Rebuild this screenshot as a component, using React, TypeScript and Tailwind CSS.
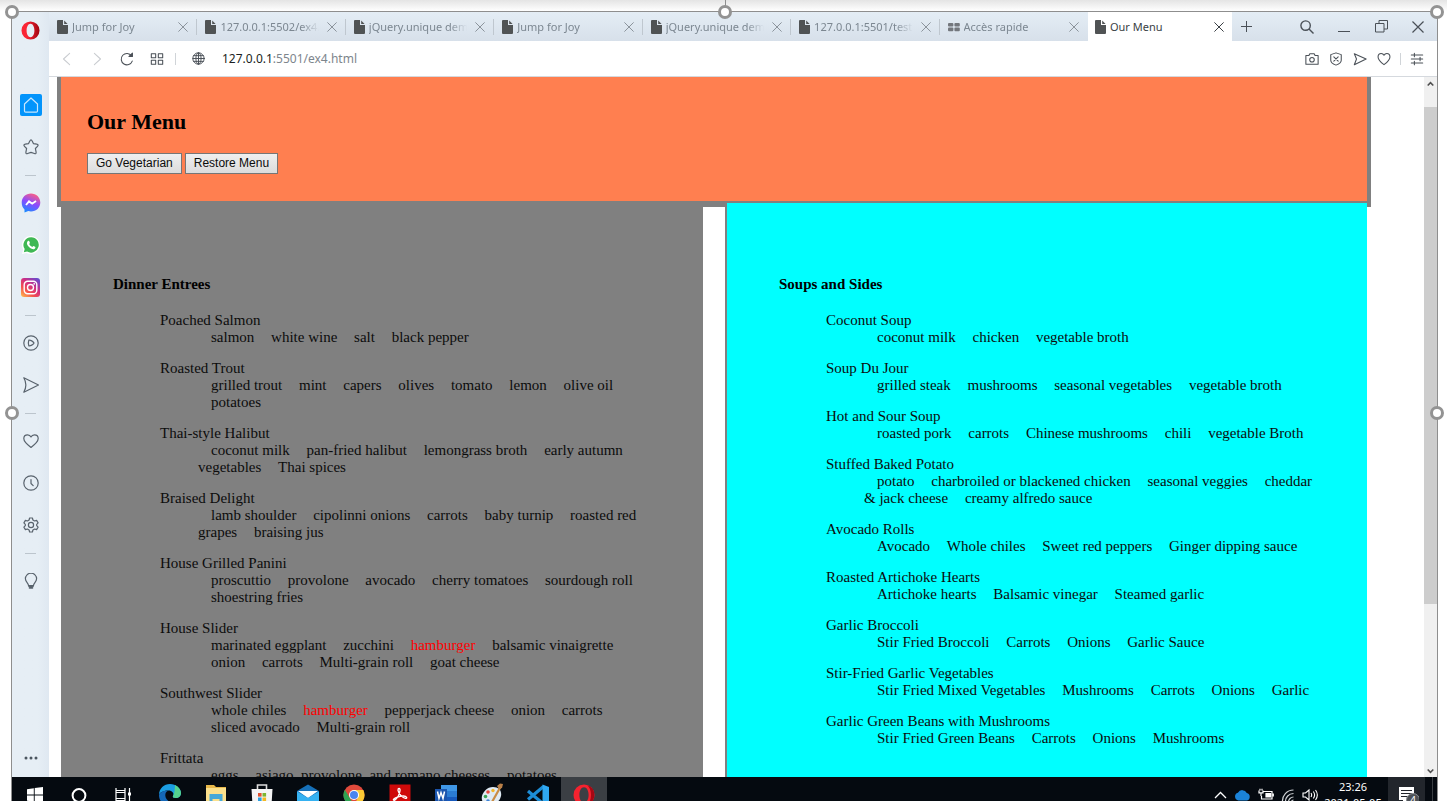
import { useState } from 'react'
import type { ReactNode } from 'react'

interface Dish {
	name: string
	ingredients: string[]
}

const entrees: Dish[] = [
	{ name: 'Poached Salmon', ingredients: ['salmon', 'white wine', 'salt', 'black pepper'] },
	{ name: 'Roasted Trout', ingredients: ['grilled trout', 'mint', 'capers', 'olives', 'tomato', 'lemon', 'olive oil', 'potatoes'] },
	{ name: 'Thai-style Halibut', ingredients: ['coconut milk', 'pan-fried halibut', 'lemongrass broth', 'early autumn vegetables', 'Thai spices'] },
	{ name: 'Braised Delight', ingredients: ['lamb shoulder', 'cipolinni onions', 'carrots', 'baby turnip', 'roasted red grapes', 'braising jus'] },
	{ name: 'House Grilled Panini', ingredients: ['proscuttio', 'provolone', 'avocado', 'cherry tomatoes', 'sourdough roll', 'shoestring fries'] },
	{ name: 'House Slider', ingredients: ['marinated eggplant', 'zucchini', 'hamburger', 'balsamic vinaigrette', 'onion', 'carrots', 'Multi-grain roll', 'goat cheese'] },
	{ name: 'Southwest Slider', ingredients: ['whole chiles', 'hamburger', 'pepperjack cheese', 'onion', 'carrots', 'sliced avocado', 'Multi-grain roll'] },
	{ name: 'Frittata', ingredients: ['eggs', 'asiago, provolone, and romano cheeses', 'potatoes'] },
]

const sides: Dish[] = [
	{ name: 'Coconut Soup', ingredients: ['coconut milk', 'chicken', 'vegetable broth'] },
	{ name: 'Soup Du Jour', ingredients: ['grilled steak', 'mushrooms', 'seasonal vegetables', 'vegetable broth'] },
	{ name: 'Hot and Sour Soup', ingredients: ['roasted pork', 'carrots', 'Chinese mushrooms', 'chili', 'vegetable Broth'] },
	{ name: 'Stuffed Baked Potato', ingredients: ['potato', 'charbroiled or blackened chicken', 'seasonal veggies', 'cheddar & jack cheese', 'creamy alfredo sauce'] },
	{ name: 'Avocado Rolls', ingredients: ['Avocado', 'Whole chiles', 'Sweet red peppers', 'Ginger dipping sauce'] },
	{ name: 'Roasted Artichoke Hearts', ingredients: ['Artichoke hearts', 'Balsamic vinegar', 'Steamed garlic'] },
	{ name: 'Garlic Broccoli', ingredients: ['Stir Fried Broccoli', 'Carrots', 'Onions', 'Garlic Sauce'] },
	{ name: 'Stir-Fried Garlic Vegetables', ingredients: ['Stir Fried Mixed Vegetables', 'Mushrooms', 'Carrots', 'Onions', 'Garlic'] },
	{ name: 'Garlic Green Beans with Mushrooms', ingredients: ['Stir Fried Green Beans', 'Carrots', 'Onions', 'Mushrooms'] },
]

const tabs = [
	'Jump for Joy',
	'127.0.0.1:5502/ex4.html',
	'jQuery.unique demo',
	'Jump for Joy',
	'jQuery.unique demo',
	'127.0.0.1:5501/test.html',
	'Accès rapide',
]

interface LineIconProps {
	size?: number
	children: ReactNode
}

// thin outlined glyph on a 16 unit grid
function LineIcon({ size = 16, children }: LineIconProps) {
	return (
		<svg width={size} height={size} viewBox="0 0 16 16" fill="none" stroke="currentColor" strokeWidth="1.2" strokeLinecap="round" strokeLinejoin="round" className="shrink-0">
			{children}
		</svg>
	)
}

function FileIcon() {
	return (
		<svg width="11" height="14" viewBox="0 0 11 14" fill="#505354" className="shrink-0">
			<path d="M1 0h5v5h5v8a1 1 0 0 1-1 1H1a1 1 0 0 1-1-1V1a1 1 0 0 1 1-1z" />
			<path d="M7.2 0.6 10.6 4H7.2z" />
		</svg>
	)
}

function SpeedDialIcon() {
	return (
		<svg width="12" height="14" viewBox="0 0 12 14" fill="#73777d" className="shrink-0">
			<rect x="0" y="3" width="5.4" height="3.6" rx="1" />
			<rect x="6.4" y="3" width="5.4" height="3.6" rx="1" />
			<rect x="0" y="7.6" width="5.4" height="3.6" rx="1" />
			<rect x="6.4" y="7.6" width="5.4" height="3.6" rx="1" />
		</svg>
	)
}

function CloseIcon({ size = 10 }: { size?: number }) {
	return (
		<svg width={size} height={size} viewBox="0 0 10 10" fill="none" stroke="currentColor" strokeWidth="1" className="shrink-0">
			<path d="M0.4 0.4 9.6 9.6M9.6 0.4 0.4 9.6" />
		</svg>
	)
}

function OperaLogo({ size }: { size: number }) {
	return (
		<svg width={size} height={size} viewBox="0 0 20 20">
			<defs>
				<linearGradient id="opera" x1="0" x2="1">
					<stop offset="0.3" stopColor="#fa2535" />
					<stop offset="1" stopColor="#a1040f" />
				</linearGradient>
			</defs>
			<path fillRule="evenodd" fill="url(#opera)" d="M10 0.5a9.5 9.5 0 1 0 0 19a9.5 9.5 0 1 0 0-19zM10 3c2.400 0 4.100 3 4.100 7s-1.700 7-4.100 7s-4.100-3-4.100-7s1.700-7 4.100-7z" />
		</svg>
	)
}

function TabBar() {
	return (
		<div className="flex h-[29px] bg-linear-to-b from-[#e4edf5] to-[#d7e0ea]">
			{tabs.map((title, i) => (
				<div key={i} className="flex min-w-0 flex-1 items-center gap-1 pl-2 text-[#7c8791]">
					{title === 'Accès rapide' ? <SpeedDialIcon /> : <FileIcon />}
					<span className="min-w-0 flex-1 overflow-hidden whitespace-nowrap text-[11px] leading-4 [mask-image:linear-gradient(to_right,black_82%,transparent)]">
						{title}
					</span>
					<button aria-label="Close tab" className="flex h-4 w-[18px] items-center justify-center text-[#8b939b]">
						<CloseIcon />
					</button>
					<span className={i < 6 ? 'h-4 w-px bg-[#bfc7cf]' : 'w-px'} />
				</div>
			))}
			<div className="flex w-36 items-center gap-1 bg-white pl-[7px] text-[#3a3f44]">
				<FileIcon />
				<span className="flex-1 text-[11px] leading-4">Our Menu</span>
				<button aria-label="Close tab" className="mr-[7px] flex h-4 w-3 items-center justify-center">
					<CloseIcon />
				</button>
			</div>
			<div className="flex w-[205px] items-center text-[#4a5057]">
				<button aria-label="New tab" className="flex w-[30px] justify-center">
					<svg width="11" height="11" viewBox="0 0 11 11" stroke="currentColor" fill="none"><path d="M5.500 0v11M0 5.500h11" /></svg>
				</button>
				<span className="flex-1" />
				<button aria-label="Search tabs" className="flex w-[37px] justify-center">
					<svg width="14" height="14" viewBox="0 0 14 14" stroke="currentColor" strokeWidth="1.400" fill="none">
						<circle cx="5.600" cy="5.600" r="4.700" /><path d="m9 9 4.500 4.500" />
					</svg>
				</button>
				<button aria-label="Minimize" className="flex w-[37px] justify-center">
					<svg width="12" height="14" viewBox="0 0 12 14" stroke="currentColor" fill="none"><path d="M0 11.500h12" /></svg>
				</button>
				<button aria-label="Restore" className="flex w-[37px] justify-center">
					<svg width="13" height="13" viewBox="0 0 13 13" stroke="currentColor" fill="none">
						<path d="M0.500 3.500h8.500v8.500h-8.500zM4 3.500v-3h8.500v8.500H9" />
					</svg>
				</button>
				<button aria-label="Close" className="flex w-[37px] justify-center">
					<CloseIcon size={12} />
				</button>
			</div>
		</div>
	)
}

function AddressBar() {
	return (
		<div className="flex h-9 items-center border-b border-[#d5d9de] bg-white pl-[3px] text-[#4a5057]">
			<button aria-label="Back" className="flex w-[30px] justify-center text-[#c9ccd0]">
				<LineIcon size={14}><path d="M11 1.500 4 8l7 6.500" /></LineIcon>
			</button>
			<button aria-label="Forward" className="flex w-[30px] justify-center text-[#c9ccd0]">
				<LineIcon size={14}><path d="M5 1.500 12 8l-7 6.500" /></LineIcon>
			</button>
			<button aria-label="Reload" className="flex w-[30px] justify-center">
				<LineIcon size={14}>
					<path d="M14 10.400a6.500 6.500 0 1 1-.8-6" />
					<path d="M14.200 1.200v4h-4z" fill="currentColor" />
				</LineIcon>
			</button>
			<button aria-label="Speed dial" className="flex w-[30px] justify-center">
				<LineIcon size={14}>
					<rect x="1.500" y="2" width="5" height="4.500" /><rect x="9.500" y="2" width="5" height="4.500" />
					<rect x="1.500" y="9.500" width="5" height="4.500" /><rect x="9.500" y="9.500" width="5" height="4.500" />
				</LineIcon>
			</button>
			<span className="mr-3 ml-[3px] h-3 w-px bg-[#d0d4d8]" />
			<span className="w-[34px] pl-1">
				<LineIcon size={13}>
					<circle cx="8" cy="8" r="7" /><ellipse cx="8" cy="8" rx="3.200" ry="7" />
					<path d="M8 1v14M1 8h14M2 4.500h12M2 11.500h12" />
				</LineIcon>
			</span>
			<span className="flex-1 text-[12px] leading-4 text-[#7d858c]">
				<span className="text-[#1c1f22]">127.0.0.1</span>:5501/ex4.html
			</span>
			<button aria-label="Snapshot" className="flex w-6 justify-center">
				<LineIcon size={14}>
					<path d="M1 4h3.500l1-2h5l1 2H15v10H1z" /><circle cx="8" cy="8.800" r="2.600" />
				</LineIcon>
			</button>
			<button aria-label="Ad blocker" className="flex w-6 justify-center">
				<LineIcon size={14}><path d="M8 1 14 3v6.500c0 3-3 4.500-6 5.500-3-1-6-2.500-6-5.500V3zM5.500 5.500l5 5M10.500 5.500l-5 5" /></LineIcon>
			</button>
			<button aria-label="Send to My Flow" className="flex w-6 justify-center">
				<LineIcon size={14}><path d="M1.500 2 15 8 1.500 14.500 4 8z" /></LineIcon>
			</button>
			<button aria-label="Add bookmark" className="flex w-6 justify-center">
				<LineIcon size={14}><path d="M8 14.500C4 11.500 1.200 9 1.200 5.600 1.200 3 3 1.600 4.800 1.600 6.300 1.600 7.400 2.500 8 3.800c.600-1.300 1.700-2.200 3.200-2.200 1.800 0 3.600 1.400 3.600 4C14.800 9 12 11.500 8 14.500z" /></LineIcon>
			</button>
			<span className="mx-1 h-3 w-px bg-[#d0d4d8]" />
			<button aria-label="Easy setup" className="mr-2 flex w-6 justify-center">
				<LineIcon size={14}><path d="M1.500 3.500h13M1.500 8h13M1.500 12.500h13M5 1.500v4M11.500 6v4M5 10.500v4" /></LineIcon>
			</button>
		</div>
	)
}

function SideButton({ label, children }: { label: string; children: ReactNode }) {
	return (
		<button aria-label={label} className="flex h-[42px] w-full items-center justify-center">
			{children}
		</button>
	)
}

function SideDivider() {
	return (
		<span className="flex h-[14px] items-center">
			<span className="h-px w-[11px] bg-[#bcc5cd]" />
		</span>
	)
}

function Sidebar() {
	return (
		<aside className="flex w-[37px] flex-col items-center bg-linear-to-r from-[#e6eef5] from-70% to-[#dfe8f1] text-[#59636d]">
			<div className="flex h-[72px] pt-[9px]">
				<OperaLogo size={19} />
			</div>
			<SideButton label="Home">
				<span className="flex h-[22px] w-[22px] items-center justify-center rounded-xs bg-[#0394fb] text-[#c8e6fd]">
					<LineIcon><path d="M8 1 14.500 7v7a1.200 1.200 0 0 1-1.200 1.200H2.700A1.200 1.200 0 0 1 1.500 14V7z" /></LineIcon>
				</span>
			</SideButton>
			<SideButton label="Bookmarks">
				<LineIcon>
					<path d="M8 .8c.500 0 .900.500 1.200 1.200l1.200 2.600 3.400.600c1.400.200 1.700 1.200.700 2.100L12.400 9.500l.700 3.700c.200 1.400-.500 1.900-1.700 1.300L8 13.400l-3.400 1.100c-1.200.600-1.900.100-1.700-1.300l.700-3.700L1.500 7.300C.500 6.400.8 5.400 2.200 5.200l3.400-.600L6.800 2C7.100 1.300 7.500.8 8 .8z" />
				</LineIcon>
			</SideButton>
			<SideDivider />
			<SideButton label="Messenger">
				<svg width="20" height="20" viewBox="0 0 20 20">
					<defs>
						<linearGradient id="messenger" x1="0.300" y1="1" x2="0.700" y2="0">
							<stop offset="0" stopColor="#1a8cff" />
							<stop offset="0.500" stopColor="#8a4bff" />
							<stop offset="1" stopColor="#ff6080" />
						</linearGradient>
					</defs>
					<path fill="url(#messenger)" d="M10 .500c5.300 0 9.300 3.900 9.300 9s-4 9-9.300 9c-1 0-1.900-.100-2.700-.400L3.500 19.500v-3C1.700 14.800.7 12.300.7 9.500.7 4.400 4.700.5 10 .5z" />
					<path d="m5 12 3-3.600 3.200 2.300L15 8" fill="none" stroke="#fff" strokeWidth="1.900" />
				</svg>
			</SideButton>
			<SideButton label="WhatsApp">
				<svg width="18" height="18" viewBox="0 0 18 18">
					<path fill="#fff" d="M9 0a9 9 0 1 1-4.400 16.900L0 18l1.200-4.500A9 9 0 0 1 9 0z" />
					<path fill="#3fb854" d="M9.200 1.200a7.700 7.700 0 1 1-4.100 14.300L1.800 16.300l.9-3.200A7.700 7.700 0 0 1 9.200 1.200z" />
					<path fill="#fff" d="M6.300 4.800c.4-.2.800 0 1 .4l.6 1.500c.1.400-.6 1-.7 1.400.7 1.300 1.600 2.200 3 2.800.4-.1.900-1 1.300-.9l1.600.8c.4.200.4.600.2 1.100-.5 1.200-1.900 1.500-3.100 1.100-2.500-.8-4.300-2.600-5.100-4.700-.5-1.300.2-3 1.200-3.500z" />
				</svg>
			</SideButton>
			<SideButton label="Instagram">
				<svg width="19" height="19" viewBox="0 0 19 19">
					<defs>
						<linearGradient id="instagram" x1="0" y1="1" x2="0.800" y2="0">
							<stop offset="0" stopColor="#ffc24d" />
							<stop offset="0.350" stopColor="#f4504e" />
							<stop offset="0.650" stopColor="#cf2d84" />
							<stop offset="1" stopColor="#6a4bcc" />
						</linearGradient>
					</defs>
					<rect width="19" height="19" rx="3" fill="url(#instagram)" />
					<g fill="none" stroke="#fff" strokeWidth="1.400">
						<rect x="3.200" y="3.200" width="12.600" height="12.600" rx="3.500" />
						<circle cx="9.500" cy="9.500" r="3" />
					</g>
					<circle cx="13.200" cy="5.800" r="0.900" fill="#fff" />
				</svg>
			</SideButton>
			<SideDivider />
			<SideButton label="Player">
				<LineIcon><circle cx="8" cy="8" r="7.200" /><path d="M5.800 5.200c1.500-.4 4.600 1.200 5.200 2.800-.6 1.600-3.700 3.200-5.200 2.800-.5-1.500-.5-4.100 0-5.600z" /></LineIcon>
			</SideButton>
			<SideButton label="My Flow">
				<LineIcon><path d="M.8.800 15.500 8 .8 15.200C3.500 10.500 3.500 5.500.8.800z" /></LineIcon>
			</SideButton>
			<SideDivider />
			<SideButton label="Favorites">
				<LineIcon><path d="M8 14.500C4 11.500.8 9 .8 5.600.8 3.200 2.700 1.800 4.600 1.800 6.300 1.800 7.400 2.700 8 4c.600-1.300 1.700-2.200 3.400-2.200 1.900 0 3.800 1.400 3.800 3.800C15.200 9 12 11.500 8 14.500z" /></LineIcon>
			</SideButton>
			<SideButton label="History">
				<LineIcon><circle cx="8" cy="8" r="7.200" /><path d="M8 4.500v4l2.200 2.200" /></LineIcon>
			</SideButton>
			<SideButton label="Settings">
				<LineIcon>
					<path d="M6.600 1h2.800l.5 2 1.700 1 2-.600 1.500 2.500L13.700 7.300v1.400l1.400 1.400-1.500 2.500-2-.600-1.700 1-.5 2H6.600l-.5-2-1.700-1-2 .600L.9 10.100l1.400-1.400V7.300L.9 5.900l1.500-2.500 2 .600 1.700-1z" />
					<circle cx="8" cy="8" r="2.600" />
				</LineIcon>
			</SideButton>
			<SideDivider />
			<SideButton label="Tips">
				<LineIcon>
					<path d="M5.500 12.500C5.500 10 2.400 9 2.400 5.800a5.600 5.600 0 0 1 11.200 0c0 3.200-3.100 4.200-3.100 6.700z" />
					<path d="M6 13.500h4M6.500 15h3" strokeWidth="1.600" />
				</LineIcon>
			</SideButton>
			<span className="flex-1" />
			<button aria-label="More" className="flex h-[38px] w-full items-center justify-center">
				<svg width="14" height="4" viewBox="0 0 14 4" fill="#4c5660">
					<circle cx="2" cy="2" r="1.500" /><circle cx="7" cy="2" r="1.500" /><circle cx="12" cy="2" r="1.500" />
				</svg>
			</button>
		</aside>
	)
}

function DishList({ dishes, vegetarian }: { dishes: Dish[]; vegetarian: boolean }) {
	return (
		<ul className="mt-[19px] pl-[47px]">
			{dishes.map((dish) => (
				<li key={dish.name} className="mb-[14px]">
					{dish.name}
					<ul className="pl-[38px]">
						{dish.ingredients
							.filter((item) => !vegetarian || item !== 'hamburger')
							.map((item) => (
								<li key={item} className={item === 'hamburger' ? 'inline pl-[13px] text-[#ff0000]' : 'inline pl-[13px]'}>
									{item}{' '}
								</li>
							))}
					</ul>
				</li>
			))}
		</ul>
	)
}

function MenuPage() {
	const [vegetarian, setVegetarian] = useState(false)

	return (
		<main className="min-w-0 flex-1 overflow-hidden bg-white pr-[53px] pl-2 font-['Liberation_Serif',serif] text-[15px] leading-[17px] text-[#0c0c0c]">
			<header className="h-[130px] border-x-4 border-b-6 border-[#808080] bg-[#ff7f50] px-[26px] pt-8">
				<h1 className="text-[22px] leading-[26px] font-bold text-black">Our Menu</h1>
				<div className="mt-[18px] flex gap-[3px] font-['Liberation_Sans',sans-serif] text-[12px] leading-[17px]">
					<button
						onClick={() => setVegetarian(true)}
						className="h-[21px] border border-[#767676] bg-linear-to-b from-[#efefef] to-[#dcdcdc] px-2"
					>
						Go Vegetarian
					</button>
					<button
						onClick={() => setVegetarian(false)}
						className="h-[21px] border border-[#767676] bg-linear-to-b from-[#efefef] to-[#dcdcdc] px-2"
					>
						Restore Menu
					</button>
				</div>
			</header>
			<div className="grid grid-cols-2 gap-[22px] px-1">
				<section className="bg-[#808080] px-[52px] pt-[69px]">
					<h2 className="font-bold text-black">Dinner Entrees</h2>
					<DishList dishes={entrees} vegetarian={vegetarian} />
				</section>
				<section className="-mt-1 border-l-2 border-[#808080] bg-[#00ffff] pt-[73px] pr-12 pl-[52px]">
					<h2 className="font-bold text-black">Soups and Sides</h2>
					<DishList dishes={sides} vegetarian={vegetarian} />
				</section>
			</div>
		</main>
	)
}

function Scrollbar() {
	return (
		<div className="flex w-[13px] flex-col items-center bg-[#f0f0f0] text-[#505050]">
			<div className="flex h-[30px] pt-1">
				<svg width="7" height="6" viewBox="0 0 7 6" fill="none" stroke="currentColor" strokeWidth="1.600"><path d="M.7 4.500 3.500 1.700l2.800 2.800" /></svg>
			</div>
			<div className="h-[71%] w-full bg-[#cdcdcd]" />
			<span className="flex-1" />
			<svg width="7" height="10" viewBox="0 0 7 10" fill="none" stroke="currentColor" strokeWidth="1.600"><path d="m.7 2.500 2.800 2.800 2.800-2.800" /></svg>
		</div>
	)
}

interface TaskButtonProps {
	label: string
	children: ReactNode
	system?: boolean
	active?: boolean
}

function TaskButton({ label, children, system, active }: TaskButtonProps) {
	return (
		<button aria-label={label} className={`flex items-center justify-center ${system ? 'w-[45px]' : 'w-[46px]'} ${active ? 'bg-[#3b3f44]' : ''}`}>
			<svg width="24" height="24" viewBox="0 0 24 24">{children}</svg>
		</button>
	)
}

function Taskbar() {
	return (
		<footer className="flex h-9 shrink-0 bg-[#050a10] text-white">
			<TaskButton label="Start" system>
				<path fill="#fff" d="M4 6.200 10.800 5.200v6.300H4zM11.700 5.100 20 4v7.500h-8.300zM4 12.400h6.800v6.300L4 17.700zM11.700 12.400H20V20l-8.300-1.200z" />
			</TaskButton>
			<TaskButton label="Search" system>
				<circle cx="11" cy="12.500" r="6.400" fill="none" stroke="#fff" strokeWidth="2" />
			</TaskButton>
			<TaskButton label="Task view" system>
				<g fill="none" stroke="#fff" strokeWidth="1.200">
					<path d="M3 5v2.500h9V5M3 20v-2.500h9V20M3 9.500h9v6H3zM3 5v15M12 5v15M16.500 5v15" />
				</g>
				<rect x="15" y="9.500" width="3" height="3" fill="#fff" />
			</TaskButton>
			<TaskButton label="Edge">
				<path fill="#1b9de2" d="M1 12C1 5.500 6 1 12 1s11 4.500 11 9c0 3-2.300 5-5.200 5-2.200 0-3.600-.8-2.800-2 1.500-3-1-5.500-4.500-5.500C6 7.500 2 9 1 12z" />
				<path fill="#54d38e" d="M17 2c3.600 1.700 6 4.800 6 8 0 3-2.300 5-5.200 5-2.200 0-3.600-.8-2.800-2 1.400-2 1.800-6 2-11z" />
				<path fill="#1568b8" d="M1 12c1-3 5-4.500 9-4.300C7 9 6.500 13 8.500 16s6 4.500 10 3.500C16 23 12 23.500 9 22.600 4 21 1 17 1 12z" />
			</TaskButton>
			<TaskButton label="File explorer">
				<path fill="#e8b84a" d="M2 2h8l2 2h10v6H2z" />
				<path fill="#fbe08c" d="M2 5h20v16H2z" />
				<path fill="#46a8d8" d="M5.500 11h13v10h-3v-5h-7v5h-3z" />
			</TaskButton>
			<TaskButton label="Microsoft Store">
				<path fill="none" stroke="#ddd" strokeWidth="1.600" d="M7.500 7V2h9v5" />
				<path fill="#f4f4f4" d="M1.500 6h21l-1 16h-19z" />
				<path fill="#e2502e" d="M8 10h3.600v3.600H8z" /><path fill="#7db52f" d="M12.500 10h3.600v3.600h-3.600z" />
				<path fill="#2a9fe0" d="M8 14.500h3.600v3.600H8z" /><path fill="#f4b920" d="M12.500 14.500h3.600v3.600h-3.600z" />
			</TaskButton>
			<TaskButton label="Mail">
				<path fill="#1670b8" d="M12 1.500 23 8v13H1V8z" />
				<path fill="#fff" d="M2 8h20l-10 7z" />
				<path fill="#35b1f1" d="M1 8.500 12 15l11-6.500V22H1z" />
			</TaskButton>
			<TaskButton label="Chrome">
				<circle cx="12" cy="12" r="10.500" fill="#e04a3c" />
				<path fill="#2fa552" d="M2.900 6.700 9 17l3 5.500A10.500 10.500 0 0 1 2.900 6.700z" />
				<path fill="#fbc934" d="M12 7h9.300A10.500 10.500 0 0 1 12 22.500l4-8z" />
				<circle cx="12" cy="12" r="5" fill="#fff" /><circle cx="12" cy="12" r="4" fill="#4a85ee" />
			</TaskButton>
			<TaskButton label="Acrobat Reader">
				<path fill="#cf0a0a" d="M1.500 1.500h21v21h-21z" />
				<path fill="none" stroke="#fff" strokeWidth="1.300" d="M11 5.500c2 0 .8 4-.5 7-1.500 3-4 5.500-5 4.500-1-1.500 6-4 10-4 3.500 0 4 2.500 2 2.300-3-.3-7-5-7.500-8 0-1 .3-1.800 1-1.800z" />
			</TaskButton>
			<TaskButton label="Word">
				<path fill="#3f97e6" d="M7 2h16v6H7z" /><path fill="#2b7cd3" d="M7 8h16v6H7z" /><path fill="#185abd" d="M7 14h16v8H7z" />
				<path fill="#1b55ad" d="M1 6h12v12H1z" />
				<path fill="none" stroke="#fff" strokeWidth="1.500" d="m3.500 8.500 1.500 7L7 9.500l2 6 1.500-7" />
			</TaskButton>
			<TaskButton label="Paint">
				<path fill="#dfeaf3" d="M13 4c6 0 9 4 8 9s-6 9-12 9-8-5-7-9 5-9 11-9z" />
				<circle cx="8" cy="9" r="1.800" fill="#e8483c" /><circle cx="13" cy="7.500" r="1.700" fill="#f2b62b" />
				<circle cx="5.500" cy="13.500" r="1.800" fill="#3ba654" /><circle cx="8" cy="18" r="1.800" fill="#3b82d6" />
				<path stroke="#c98c45" strokeWidth="2.200" d="M21 3 12 19" />
				<path fill="#b98048" d="m17 3 3-2.500 3 .5-1 4-3 1z" />
			</TaskButton>
			<TaskButton label="Visual Studio Code">
				<path fill="none" stroke="#1c8dd6" strokeWidth="3.200" d="M17.500 3.500 2 16.500M2 8l15.500 13" />
				<path fill="#2fa8f2" d="M16.500 1.500 23 4v16l-6.500 2.500z" />
			</TaskButton>
			<TaskButton label="Opera" active>
				<path fillRule="evenodd" fill="#f5222f" d="M12 1.500a10.500 10.500 0 1 0 0 21a10.500 10.500 0 1 0 0-21zM12 4.300c2.800 0 4.600 3.400 4.600 7.700s-1.800 7.700-4.600 7.700-4.600-3.400-4.600-7.700S9.200 4.300 12 4.300z" />
				<path fill="#a50813" d="M15 2a10.500 10.500 0 0 1 0 20c2.500-2 4-5.600 4-10s-1.500-8-4-10z" />
			</TaskButton>
			<span className="flex-1" />
			<div className="flex items-center gap-[7px]">
				<svg width="13" height="14" viewBox="0 0 13 14" fill="none" stroke="#fff" strokeWidth="1.300"><path d="m1 10 5.500-5.500L12 10" /></svg>
				<svg width="17" height="14" viewBox="0 0 17 14" fill="#1b83d8"><path d="M4.500 12.500a4 4 0 0 1-.6-7.800A5 5 0 0 1 12.800 5a3.900 3.900 0 0 1 .2 7.500z" /></svg>
				<svg width="16" height="14" viewBox="0 0 16 14" fill="none" stroke="#fff" strokeWidth="1.200">
					<path d="M5 3.500h9v7.500H3.500V8M1 2.500v2.300h4V2.500M2 .8v1.700M4 .8v1.700M3 5v3M15.300 5.500v3" />
					<path fill="#fff" d="M8 5.500h4.500V9H8z" />
				</svg>
				<svg width="14" height="15" viewBox="0 0 14 15" fill="none" stroke="#cfd2d5" strokeWidth="1.200">
					<path d="M1.500 14A11 11 0 0 1 12.500 2M4.500 14a8 8 0 0 1 8-8.500M7.500 14a5 5 0 0 1 5-5M10.500 14a2 2 0 0 1 2-2" />
				</svg>
				<svg width="16" height="14" viewBox="0 0 16 14" fill="none" stroke="#fff" strokeWidth="1.100">
					<path d="M1 5h2.500L7 2v10L3.500 9H1zM9 5c.8 1.200.8 2.800 0 4M11.300 3.500c1.500 2 1.500 5 0 7M13.500 2c2.200 3 2.200 7 0 10" />
				</svg>
			</div>
			<div className="w-[70px] pt-[2px] text-center text-[11px] leading-4">
				<div>23:26</div>
				<div>2021-05-05</div>
			</div>
			<button aria-label="Notifications" className="flex w-[37px] items-center justify-center bg-[#22262c]">
				<svg width="24" height="24" viewBox="0 0 24 24">
					<path fill="#fff" d="M4 4h15v13h-7l-4 4v-4H4z" />
					<path stroke="#22262c" d="M6 7.500h11M6 10.500h11M6 13.500h7" />
					<circle cx="18" cy="17" r="6.500" fill="#4d5156" stroke="#8f9296" />
					<text x="18" y="21" textAnchor="middle" fontSize="10" fill="#fff">4</text>
				</svg>
			</button>
			<span className="mr-1 ml-[7px] w-px bg-[#3a3e43]" />
		</footer>
	)
}

const handle = 'absolute h-[14px] w-[14px] rounded-full border-[3px] border-[#939393] bg-white'

export default function App() {
	return (
		<div className="h-screen overflow-hidden bg-white bg-[linear-gradient(to_bottom,#e4e4e4,#ffffff_11px)] pt-[11px] pr-[9px] pl-[11px] font-['Noto_Sans','Open_Sans',sans-serif]">
			<div className="relative flex h-[calc(100vh+2px)] flex-col border border-[#8e8e8e]">
				<div className="flex min-h-0 flex-1">
					<Sidebar />
					<div className="flex min-w-0 flex-1 flex-col">
						<TabBar />
						<AddressBar />
						<div className="flex min-h-0 flex-1">
							<MenuPage />
							<Scrollbar />
						</div>
					</div>
				</div>
				<Taskbar />
				{/* resize handles of the selected frame */}
				<span className="absolute -top-3 left-1/2 h-3 w-px bg-[#8e8e8e]" />
				<span className={`${handle} -top-[7px] -left-[7px]`} />
				<span className={`${handle} -top-[7px] left-1/2 -translate-x-1/2`} />
				<span className={`${handle} -top-[7px] -right-[7px]`} />
				<span className={`${handle} top-1/2 -left-[7px] -translate-y-1/2`} />
				<span className={`${handle} top-1/2 -right-[7px] -translate-y-1/2`} />
			</div>
		</div>
	)
}
